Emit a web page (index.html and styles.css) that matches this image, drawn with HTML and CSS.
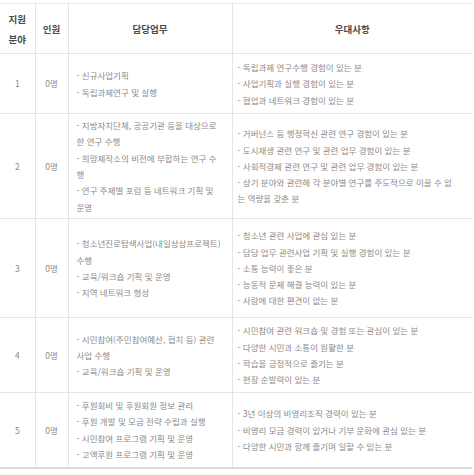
FILE: index.html
```html
<!DOCTYPE html>
<html lang="ko">
<head>
<meta charset="utf-8">
<link rel="stylesheet" href="styles.css">
</head>
<body>
<table class="recruit">
  <colgroup>
    <col class="c-field">
    <col class="c-count">
    <col class="c-duty">
    <col class="c-pref">
  </colgroup>
  <thead>
    <tr class="head-row">
      <th>지원<br>분야</th>
      <th>인원</th>
      <th>담당업무</th>
      <th>우대사항</th>
    </tr>
  </thead>
  <tbody>
    <tr class="row-1">
      <td class="num">1</td>
      <td class="num">0명</td>
      <td class="duty">- 신규사업기획<br>- 독립과제연구 및 실행</td>
      <td class="pref">- 독립과제 연구수행 경험이 있는 분<br>- 사업기획과 실행 경험이 있는 분<br>- 협업과 네트워크 경험이 있는 분</td>
    </tr>
    <tr class="row-2">
      <td class="num">2</td>
      <td class="num">0명</td>
      <td class="duty">- 지방자치단체, 공공기관 등을 대상으로<br>한 연구 수행<br>- 희망제작소의 비전에 부합하는 연구 수<br>행<br>- 연구 주제별 포럼 등 네트워크 기획 및<br>운영</td>
      <td class="pref">- 거버넌스 등 행정혁신 관련 연구 경험이 있는 분<br>- 도시재생 관련 연구 및 관련 업무 경험이 있는 분<br>- 사회적경제 관련 연구 및 관련 업무 경험이 있는 분<br>- 상기 분야와 관련해 각 분야별 연구를 주도적으로 이끌 수 있<br>는 역량을 갖춘 분</td>
    </tr>
    <tr class="row-3">
      <td class="num">3</td>
      <td class="num">0명</td>
      <td class="duty">- 청소년진로탐색사업(내일상상프로젝트)<br>수행<br>- 교육/워크숍 기획 및 운영<br>- 지역 네트워크 형성</td>
      <td class="pref">- 청소년 관련 사업에 관심 있는 분<br>- 담당 업무 관련사업 기획 및 실행 경험이 있는 분<br>- 소통 능력이 좋은 분<br>- 능동적 문제 해결 능력이 있는 분<br>- 사람에 대한 편견이 없는 분</td>
    </tr>
    <tr class="row-4">
      <td class="num">4</td>
      <td class="num">0명</td>
      <td class="duty">- 시민참여(주민참여예산, 협치 등) 관련<br>사업 수행<br>- 교육/워크숍 기획 및 운영</td>
      <td class="pref">- 시민참여 관련 워크숍 및 경험 또는 관심이 있는 분<br>- 다양한 시민과 소통이 원활한 분<br>- 학습을 긍정적으로 즐기는 분<br>- 현장 순발력이 있는 분</td>
    </tr>
    <tr class="row-5">
      <td class="num">5</td>
      <td class="num">0명</td>
      <td class="duty">- 후원회비 및 후원회원 정보 관리<br>- 후원 개발 및 모금 전략 수립과 실행<br>- 시민참여 프로그램 기획 및 운영<br>- 고액후원 프로그램 기획 및 운영</td>
      <td class="pref">- 3년 이상의 비영리조직 경력이 있는 분<br>- 비영리 모금 경력이 있거나 기부 문화에 관심 있는 분<br>- 다양한 시민과 함께 즐기며 일할 수 있는 분</td>
    </tr>
  </tbody>
</table>
</body>
</html>
```
FILE: styles.css
```css
html, body {
  margin: 0;
  padding: 0;
  background: #ffffff;
}

body {
  font-family: "Noto Sans CJK KR", "Noto Sans", sans-serif;
  color: #8a8a8a;
  padding-top: 3px;
}

.recruit {
  width: 472px;
  border-collapse: collapse;
  table-layout: fixed;
  border-top: 1px solid #ececec;
  border-bottom: 2px solid #dcdcdc;
}

.c-field { width: 35px; }
.c-count { width: 33px; }
.c-duty { width: 164px; }
.c-pref { width: 240px; }

.recruit th,
.recruit td {
  border-left: 1px solid #e6e6e6;
  border-bottom: 1px solid #e6e6e6;
  padding: 0;
  vertical-align: middle;
  white-space: nowrap;
}

.recruit th:first-child,
.recruit td:first-child {
  border-left: none;
}

.recruit th {
  font-size: 9.5px;
  font-weight: bold;
  color: #4a4a4a;
  line-height: 20px;
  text-align: center;
}

.head-row { height: 50px; }
.row-1 { height: 60px; }
.row-2 { height: 105px; }
.row-3 { height: 99px; }
.row-4 { height: 75px; }
.row-5 { height: 75px; }

.recruit td {
  font-size: 8.5px;
  line-height: 16.3px;
}

.recruit td.num {
  text-align: center;
}

.recruit td.duty {
  padding-left: 8px;
}

.recruit td.pref {
  padding-left: 5px;
}
```
